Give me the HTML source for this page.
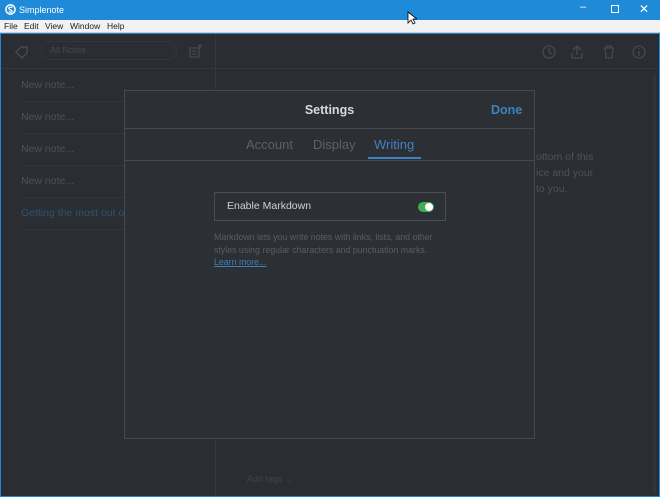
<!DOCTYPE html>
<html><head><style>
*{margin:0;padding:0;box-sizing:border-box}
body{width:660px;height:497px;overflow:hidden;background:#1f86d4;font-family:"Liberation Sans",sans-serif;position:relative}
.t{position:absolute;white-space:nowrap}
#title{position:absolute;left:0;top:0;width:660px;height:20px;background:#1f8ad8;color:#fff;font-size:9px}
#menu{position:absolute;left:0;top:20px;width:660px;height:13px;background:#f2f2f2;border-bottom:1px solid #ccc;font-size:8.5px;color:#222}
#app{position:absolute;left:1px;top:34px;width:658px;height:462px;background:#2a2d31}
.note{position:absolute;left:20px;font-size:10.5px;color:#4f5359}
.sep{position:absolute;left:20px;width:195px;height:1px;background:#33373c}
#modal{position:absolute;left:124px;top:90px;width:411px;height:349px;background:#2c2f34;border:1px solid #464a50}
</style></head><body>
<div id="title">
<svg class="t" style="left:5px;top:4px" width="11" height="11" viewBox="0 0 12 12"><circle cx="6" cy="6" r="5" fill="none" stroke="#fff" stroke-width="1.6"/><path d="M8 3.8C6 3 4 3.5 4.2 5S8 6.5 7.8 8 5.5 9 4 8.2" fill="none" stroke="#fff" stroke-width="1.4"/></svg>
<span class="t" style="left:19px;top:5px">Simplenote</span>
<span class="t" style="left:580px;top:1px;font-size:11px">–</span>
<div class="t" style="left:611px;top:5px;width:8px;height:8px;border:1px solid #fff"></div>
<span class="t" style="left:639px;top:2px;font-size:12px">✕</span>
</div>
<div id="menu"><span class="t" style="left:4px;top:1px">File</span><span class="t" style="left:24px;top:1px">Edit</span><span class="t" style="left:45px;top:1px">View</span><span class="t" style="left:70px;top:1px">Window</span><span class="t" style="left:107px;top:1px">Help</span></div>
<div id="app">
<div class="t" style="left:214px;top:0;width:1px;height:462px;background:#34383d"></div>
<div class="t" style="left:0;top:34px;width:214px;height:1px;background:#32363b"></div>
<div class="t" style="left:215px;top:34px;width:443px;height:1px;background:#32363b"></div>
<svg class="t" style="left:13px;top:11px" width="16" height="14"><path d="M2 7l5-5h6v6l-5 5z" fill="none" stroke="#454a50" stroke-width="1.5"/></svg>
<div class="t" style="left:40px;top:7px;width:136px;height:19px;border:1px solid #33373c;border-radius:10px"></div>
<span class="t" style="left:49px;top:11px;font-size:9px;color:#454a50">All Notes</span>
<svg class="t" style="left:188px;top:10px" width="14" height="14"><path d="M1 4h9v9H1zM3 7h5M3 10h5M11 0v5M9 2h4" fill="none" stroke="#454a50" stroke-width="1.3"/></svg>
<svg class="t" style="left:540px;top:10px" width="110" height="16" fill="none" stroke="#454a50" stroke-width="1.3"><circle cx="8" cy="8" r="6"/><path d="M8 4v4l3 2"/><path d="M32 6l4-4 4 4M36 2v9M31 9v5h10V9"/><path d="M63 4h10M66 4V2h4v2M64 4l1 10h6l1-10"/><circle cx="98" cy="8" r="6"/><path d="M98 7v5M98 4v1"/></svg>
<span class="note" style="top:45px">New note...</span><div class="sep" style="top:67px"></div>
<span class="note" style="top:77px">New note...</span><div class="sep" style="top:99px"></div>
<span class="note" style="top:109px">New note...</span><div class="sep" style="top:131px"></div>
<span class="note" style="top:141px">New note...</span><div class="sep" style="top:163px"></div>
<span class="note" style="top:173px;color:#2f5474">Getting the most out of</span><div class="sep" style="top:195px"></div>
<span class="t" style="left:535px;top:115px;font-size:10.5px;color:#4f5359;line-height:16px">ottom of this<br>ice and your<br>to you.</span>
<div class="t" style="left:652px;top:40px;width:3px;height:420px;background:#30343a"></div>
<span class="t" style="left:246px;top:440px;font-size:9px;color:#41454b">Add tags ...</span>
</div>
<div id="modal">
<span class="t" style="left:0;width:409px;text-align:center;top:12px;font-size:12.5px;font-weight:bold;color:#d8d9db">Settings</span>
<span class="t" style="left:366px;top:12px;font-size:12.5px;font-weight:bold;color:#3f82c4">Done</span>
<div class="t" style="left:0;top:37px;width:409px;height:1px;background:#464a50"></div>
<span class="t" style="left:121px;top:46px;font-size:13px;color:#5d6167">Account</span>
<span class="t" style="left:188px;top:46px;font-size:13px;color:#5d6167">Display</span>
<span class="t" style="left:249px;top:46px;font-size:13px;color:#3f82c4">Writing</span>
<div class="t" style="left:243px;top:66px;width:53px;height:2px;background:#3f82c4"></div>
<div class="t" style="left:0;top:69px;width:409px;height:1px;background:#464a50"></div>
<div class="t" style="left:89px;top:101px;width:232px;height:29px;border:1px solid #4a4e54"></div>
<span class="t" style="left:102px;top:109px;font-size:10.5px;color:#d0d1d3">Enable Markdown</span>
<div class="t" style="left:293px;top:111px;width:16px;height:10px;border-radius:5px;background:#3fae55"></div>
<div class="t" style="left:300px;top:112px;width:8px;height:8px;border-radius:4px;background:#fff"></div>
<span class="t" style="left:89px;top:140px;font-size:8.8px;color:#5a5e64;line-height:12.5px">Markdown lets you write notes with links, lists, and other<br>styles using regular characters and punctuation marks.<br><u style="color:#3f7fb8">Learn more...</u></span>
</div>
<svg class="t" style="left:407px;top:11px" width="10" height="14"><path d="M1 1v11l3-3 2 4 2-1-2-4h4z" fill="#fff" stroke="#000" stroke-width=".8"/></svg>
</body></html>
